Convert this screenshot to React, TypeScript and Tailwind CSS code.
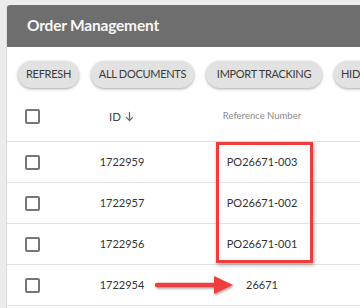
import React from "react"

const rows = [
  { id: "1722959", ref: "PO26671-003" },
  { id: "1722957", ref: "PO26671-002" },
  { id: "1722956", ref: "PO26671-001" },
  { id: "1722954", ref: "26671" },
]

function Checkbox() {
  return <div className="h-[15px] w-[15px] rounded-[2px] border-2 border-[#757575] bg-white" />
}

export default function App() {
  return (
    <div className="h-[308px] w-[360px] overflow-hidden bg-[#ececec] pl-[6px] pt-[5px] font-['Lato',sans-serif]">
      <div className="relative h-full w-[400px] rounded-tl-[3px] border-l border-[#dcdcdc] bg-white">
        <div className="flex h-[42px] items-center rounded-tl-[3px] bg-[#6e6e6e] pl-[20px]">
          <h1 className="text-[15.5px] font-bold tracking-[-0.2px] text-[#f7f7f7]">Order Management</h1>
        </div>

        <div className="flex gap-[12px] pl-[11px] pt-[14px] pb-[4px]">
          {[
            ["REFRESH", "w-[61px] justify-center"],
            ["ALL DOCUMENTS", "w-[103px] justify-center"],
            ["IMPORT TRACKING", "w-[116px] justify-center"],
            ["HIDE", "w-[80px] justify-start pl-[7px]"],
          ].map(([label, w]) => (
            <button
              key={label}
              className={`${w} flex h-[27px] shrink-0 items-center rounded-full bg-[#e2e2e2] text-[11px] tracking-[-0.3px] text-[#3a3a3a] shadow-[0_1px_3px_rgba(0,0,0,0.35)]`}
            >
              {label}
            </button>
          ))}
        </div>

        <div className="flex h-[50px] items-center border-b border-[#e2e2e2]">
          <div className="w-[54px] pl-[18px]">
            <Checkbox />
          </div>
          <div className="flex w-[122px] items-center justify-center gap-[3px] text-[11.5px] text-[#444]">
            <span>ID</span>
            <svg width="11" height="11" viewBox="0 0 12 12" fill="none" stroke="#666" strokeWidth="1.4" strokeLinecap="round" strokeLinejoin="round">
              <path d="M6 1.5v9M2.5 7l3.5 3.5L9.5 7" />
            </svg>
          </div>
          <div className="w-[158px] text-center text-[9.5px] text-[#8a8a8a]">Reference Number</div>
        </div>

        {rows.map((r) => (
          <div key={r.id} className="flex h-[41px] items-center border-b border-[#e2e2e2]">
            <div className="w-[54px] pl-[18px]">
              <Checkbox />
            </div>
            <div className="w-[122px] text-center text-[11px] text-[#333]">{r.id}</div>
            <div className="w-[158px] text-center text-[11px] text-[#333]">{r.ref}</div>
          </div>
        ))}

        <div className="absolute left-[209px] top-[137px] h-[121px] w-[97px] border-[3px] border-[#f03c3c] shadow-[1px_2px_4px_rgba(0,0,0,0.35)]" />

        <svg className="absolute left-[146px] top-[268px]" width="84" height="24" viewBox="0 0 84 24">
          <defs>
            <filter id="sh" x="-10%" y="-30%" width="120%" height="160%">
              <feDropShadow dx="1" dy="1.5" stdDeviation="1.2" floodColor="#000" floodOpacity="0.35" />
            </filter>
          </defs>
          <g filter="url(#sh)">
            <path d="M4 12 L64 12" stroke="#f03c3c" strokeWidth="4.5" strokeLinecap="round" />
            <path d="M61 3 L80 12 L61 21 Z" fill="#f03c3c" />
          </g>
        </svg>
      </div>
    </div>
  )
}
